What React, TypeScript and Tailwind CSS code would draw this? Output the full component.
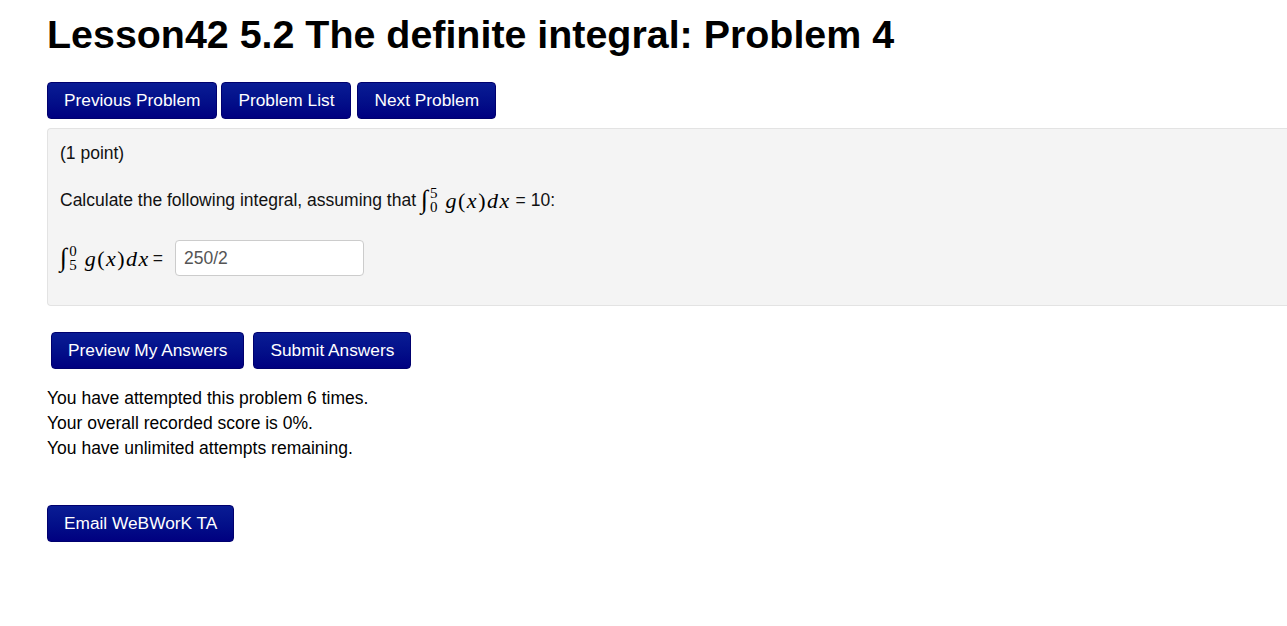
import React from "react";

const btn =
  "inline-flex h-[37px] items-center rounded-[4px] border border-[#00006e] bg-gradient-to-b from-[#0a1c94] to-[#000080] px-[16px] text-[17.3px] text-white";

const Int = ({ lo, hi }: { lo: string; hi: string }) => (
  <span className="inline-flex items-center font-['Liberation_Serif',serif] text-black">
    <span className="text-[26px] italic leading-none">∫</span>
    <span className="ml-[2px] inline-flex flex-col text-[15px] leading-[13px]">
      <span>{hi}</span>
      <span className="mt-[1px]">{lo}</span>
    </span>
    <span className="ml-[8px] text-[22px] italic tracking-[1.5px]">g</span>
    <span className="text-[22px] tracking-[1.5px]">(</span>
    <span className="text-[22px] italic tracking-[1.5px]">x</span>
    <span className="text-[22px] tracking-[1.5px]">)</span>
    <span className="text-[22px] italic tracking-[1.5px]">dx</span>
  </span>
);

export default function App() {
  return (
    <div className="min-h-screen bg-white pl-[47px] font-['Liberation_Sans',Arial,sans-serif] text-black">
      <h1 className="pt-[10px] text-[39.4px] font-bold leading-[48px]">
        Lesson42 5.2 The definite integral: Problem 4
      </h1>
      <div className="mt-[24px] flex">
        <button className={btn}>Previous Problem</button>
        <button className={`${btn} ml-[4px]`}>Problem List</button>
        <button className={`${btn} ml-[6px]`}>Next Problem</button>
      </div>
      <div className="mt-[9px] h-[178px] rounded-l-[4px] border border-r-0 border-[#e3e3e3] bg-[#f4f4f4] pl-[12px] pt-[14px] text-[17.5px] text-[#111]">
        <p className="leading-[20px]">(1 point)</p>
        <p className="mt-[24px] flex h-[26px] items-center">
          Calculate the following integral, assuming that&nbsp;
          <Int lo="0" hi="5" />
          &nbsp;= 10:
        </p>
        <div className="mt-[27px] flex items-center">
          <Int lo="5" hi="0" />
          <span className="ml-[3px]">=</span>
          <input
            className="ml-[12px] h-[36px] w-[189px] rounded-[4px] border border-[#cccccc] bg-white px-[8px] text-[17.5px] text-[#555]"
            defaultValue="250/2"
          />
        </div>
      </div>
      <div className="mt-[26px] ml-[4px] flex gap-[9px]">
        <button className={btn}>Preview My Answers</button>
        <button className={btn}>Submit Answers</button>
      </div>
      <div className="mt-[17px] text-[17.5px] leading-[25px]">
        <p>You have attempted this problem 6 times.</p>
        <p>Your overall recorded score is 0%.</p>
        <p>You have unlimited attempts remaining.</p>
      </div>
      <div className="mt-[44px]">
        <button className={btn}>Email WeBWorK TA</button>
      </div>
    </div>
  );
}
